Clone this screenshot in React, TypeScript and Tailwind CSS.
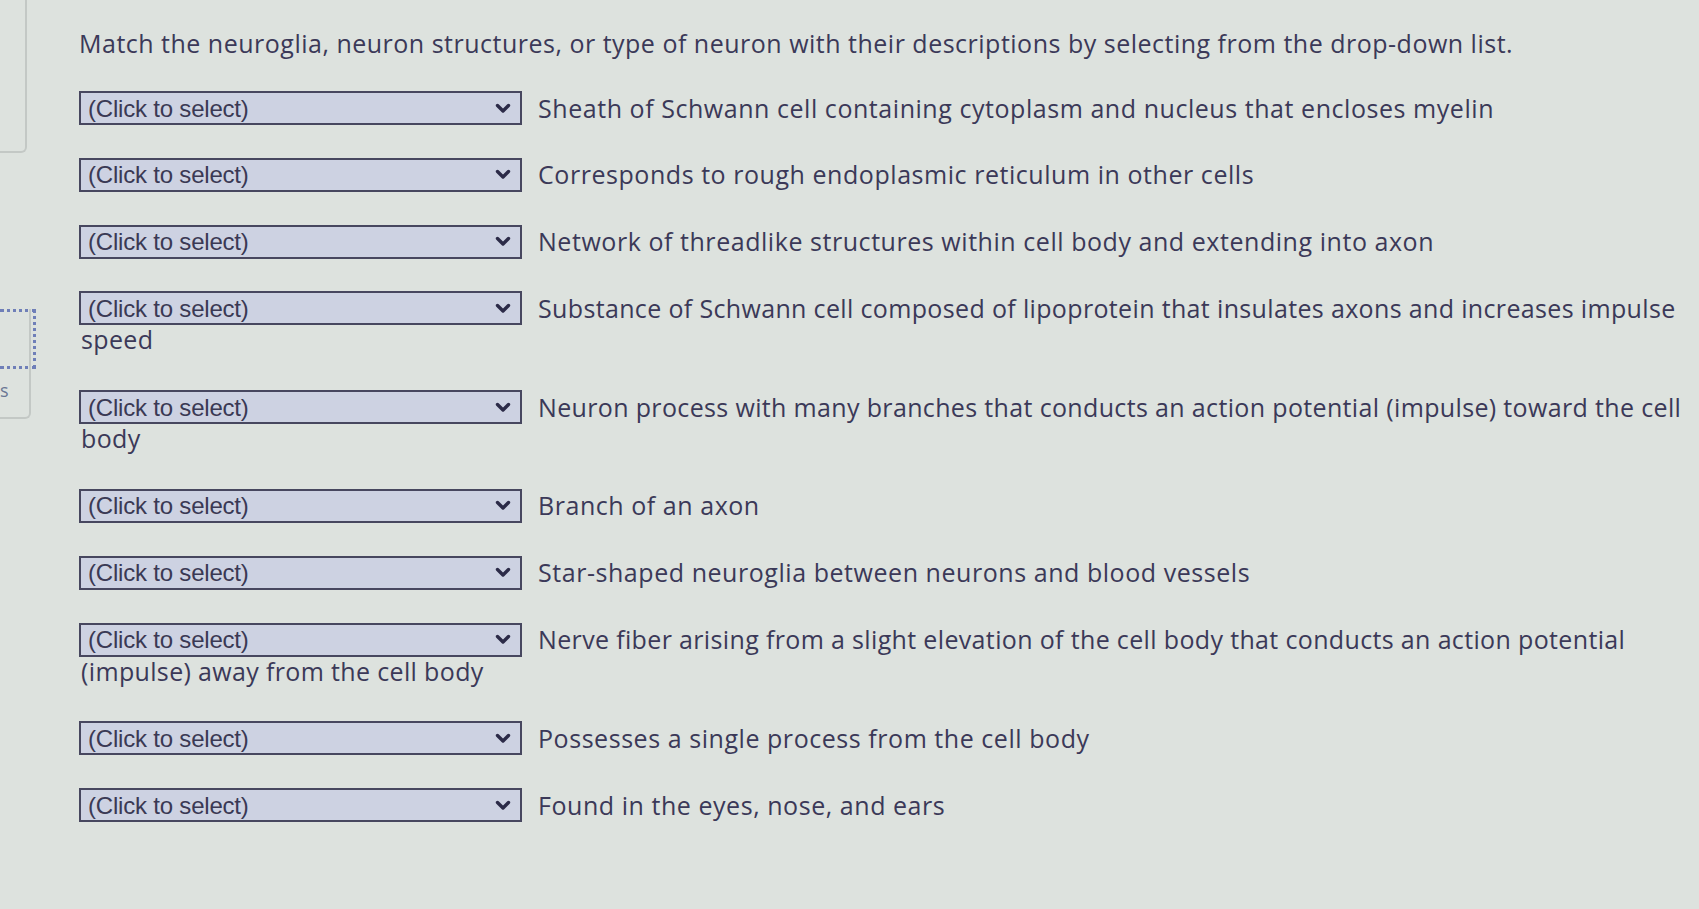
const rows: { text: string; more?: string }[] = [
  { text: 'Sheath of Schwann cell containing cytoplasm and nucleus that encloses myelin' },
  { text: 'Corresponds to rough endoplasmic reticulum in other cells' },
  { text: 'Network of threadlike structures within cell body and extending into axon' },
  {
    text: 'Substance of Schwann cell composed of lipoprotein that insulates axons and increases impulse',
    more: 'speed',
  },
  {
    text: 'Neuron process with many branches that conducts an action potential (impulse) toward the cell',
    more: 'body',
  },
  { text: 'Branch of an axon' },
  { text: 'Star-shaped neuroglia between neurons and blood vessels' },
  {
    text: 'Nerve fiber arising from a slight elevation of the cell body that conducts an action potential',
    more: '(impulse) away from the cell body',
  },
  { text: 'Possesses a single process from the cell body' },
  { text: 'Found in the eyes, nose, and ears' },
]

function Chevron() {
  return (
    <svg width="16" height="11" viewBox="0 0 16 11" className="shrink-0">
      <path d="M2.5 2.5 L8 8 L13.5 2.5" fill="none" stroke="#2c2b48" strokeWidth="3.4" strokeLinecap="round" strokeLinejoin="round" />
    </svg>
  )
}

function Select() {
  return (
    <span className="inline-flex h-[34px] w-[443px] shrink-0 items-center justify-between border-2 border-[#47475f] bg-[#cdd2e2] pl-[7px] pr-[9px] font-['Liberation_Sans',Arial,sans-serif] text-[24px] tracking-[-0.2px] text-[#3a3954]">
      <span>(Click to select)</span>
      <Chevron />
    </span>
  )
}

export default function App() {
  return (
    <main className="flex min-h-[909px] w-full overflow-hidden bg-[#dde2de] font-['Open_Sans','Lato',sans-serif] text-[#3b3958]">
      <div className="w-[30px] shrink-0">
        <div className="h-[153px] w-[27px] rounded-br-[6px] border-r-2 border-b-2 border-[#c3c8c5]" />
        <div className="mt-[156px] h-[110px] w-[31px] rounded-br-[6px] border-r-2 border-b-2 border-[#c3c8c5]">
          <div className="h-[60px] w-[36px] border-y-[3px] border-r-[3px] border-dotted border-[#6f7fb8]" />
          <div className="pt-[12px] text-[18px] leading-[18px] text-[#6a7694]">s</div>
        </div>
      </div>
      <div className="min-w-0 flex-1 pl-[49px] pt-[27px]">
        <h1 className="whitespace-nowrap text-[25px] leading-[32px] tracking-[0.5px]">
          Match the neuroglia, neuron structures, or type of neuron with their descriptions by selecting from the drop-down list.
        </h1>
        <div className="mt-[32px] flex flex-col gap-[32.8px]">
          {rows.map((r, i) => (
            <div
              key={i}
              className={r.more ? 'text-[25px] leading-[31px] tracking-[0.35px]' : 'text-[25px] leading-[31px] tracking-[0.55px]'}
            >
              <div className="flex items-center gap-[16px] whitespace-nowrap">
                <Select />
                <span>{r.text}</span>
              </div>
              {r.more && <div className="-mt-[1px] mb-[2px] whitespace-nowrap pl-[2px]">{r.more}</div>}
            </div>
          ))}
        </div>
      </div>
    </main>
  )
}
